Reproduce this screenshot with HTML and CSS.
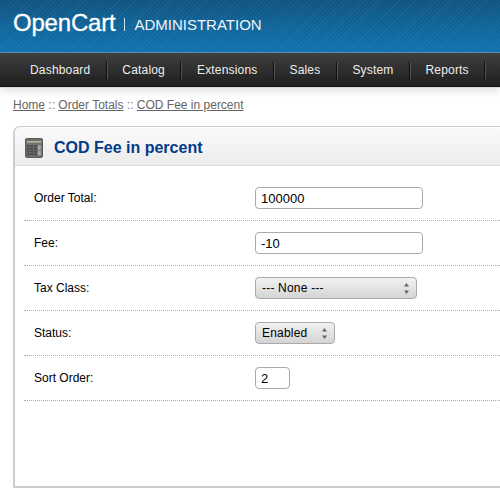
FILE: index.html
```html
<!DOCTYPE html>
<html>
<head>
    <meta charset="UTF-8">
    <title>COD Fee in percent</title>
    <link rel="stylesheet" href="styles.css">
</head>
<body>
    <div class="header">
        <span class="logo">OpenCart</span>
        <span class="logo-sep"></span>
        <span class="logo-sub">ADMINISTRATION</span>
    </div>

    <div class="menu">
        <a>Dashboard</a>
        <a>Catalog</a>
        <a>Extensions</a>
        <a>Sales</a>
        <a>System</a>
        <a>Reports</a>
    </div>

    <div class="content">
        <div class="breadcrumb">
            <a>Home</a> :: <a>Order Totals</a> :: <a>COD Fee in percent</a>
        </div>

        <div class="box">
            <div class="box-heading">
                <svg class="calc" viewBox="0 0 20 22">
                    <rect x="0.5" y="0.5" width="19" height="21" rx="1.5" fill="#6f736c" stroke="#4a4c48"/>
                    <rect x="2" y="2" width="16" height="3" fill="#b5b9a8"/>
                    <rect x="2" y="2" width="16" height="1" fill="#54574f"/>
                    <g fill="#44464a">
                        <rect x="2" y="8" width="3" height="2"/>
                        <rect x="6" y="8" width="3" height="2"/>
                        <rect x="10" y="8" width="3" height="2"/>
                        <rect x="2" y="11" width="3" height="2"/>
                        <rect x="6" y="11" width="3" height="2"/>
                        <rect x="10" y="11" width="3" height="2"/>
                        <rect x="2" y="14" width="3" height="2"/>
                        <rect x="6" y="14" width="3" height="2"/>
                        <rect x="10" y="14" width="3" height="2"/>
                        <rect x="2" y="17" width="3" height="2"/>
                        <rect x="6" y="17" width="3" height="2"/>
                        <rect x="10" y="17" width="3" height="2"/>
                    </g>
                    <rect x="14.500" y="8" width="3" height="5" fill="#a9aca6"/>
                    <rect x="14.500" y="14" width="3" height="5" fill="#a9aca6"/>
                </svg>
                <h1>COD Fee in percent</h1>
            </div>
            <div class="box-body">
                <div class="row">
                    <label>Order Total:</label>
                    <input class="field wide" type="text" value="100000">
                </div>
                <div class="row">
                    <label>Fee:</label>
                    <input class="field wide" type="text" value="-10">
                </div>
                <div class="row">
                    <label>Tax Class:</label>
                    <div class="select tax">
                        <span>--- None ---</span>
                        <svg class="arrows" viewBox="0 0 7 13"><path d="M3.500 1L6 4.500H1zM3.500 12L1 8.500h5z"/></svg>
                    </div>
                </div>
                <div class="row">
                    <label>Status:</label>
                    <div class="select status">
                        <span>Enabled</span>
                        <svg class="arrows" viewBox="0 0 7 13"><path d="M3.500 1L6 4.500H1zM3.500 12L1 8.500h5z"/></svg>
                    </div>
                </div>
                <div class="row">
                    <label>Sort Order:</label>
                    <input class="field small" type="text" value="2">
                </div>
            </div>
        </div>
    </div>
</body>
</html>
```

FILE: styles.css
```css
* { margin: 0; padding: 0; box-sizing: border-box; }
html, body { height: 500px; overflow: hidden; }
body {
    background: #fff;
    color: #000;
    font-family: "Liberation Sans", Arial, sans-serif;
    font-size: 12px;
}

.header {
    height: 53px;
    display: flex;
    align-items: center;
    padding: 0 0 6px 13px;
    border-bottom: 1px solid #5f8db5;
    background:
        repeating-linear-gradient(135deg, rgba(255, 255, 255, 0.05) 0 1px, transparent 1px 3px),
        linear-gradient(#0f5482, #0f74b0);
}
.logo {
    color: #fff;
    font-size: 24px;
    letter-spacing: -0.2px;
    -webkit-text-stroke: 0.3px #fff;
}
.logo-sep {
    width: 1px;
    height: 13px;
    margin: 2px 9px 0;
    background: #d5e4ef;
}
.logo-sub {
    color: #f0f5f9;
    font-size: 15px;
    margin-top: 2px;
}

.menu {
    height: 34px;
    display: flex;
    align-items: center;
    padding: 2px 0 0 14px;
    white-space: nowrap;
    background: linear-gradient(#3f3f3f, #1f1f1f);
    border-bottom: 1px solid #111;
    box-shadow: 0 1px 0 #ddd, 0 4px 8px rgba(0, 0, 0, 0.12);
}
.menu a {
    color: #eee;
    font-size: 12px;
    letter-spacing: 0.18px;
    line-height: 17px;
    padding: 0 15.500px 0 16px;
    margin-right: -0.5px;
    border-right: 1px solid #0e0e0e;
    box-shadow: 1px 0 0 #555;
}

.content { padding: 0 0 0 13px; }

.breadcrumb {
    height: 39px;
    padding-top: 11px;
    color: #7e7e7e;
    font-size: 12px;
    line-height: 14px;
}
.breadcrumb a { color: #656565; text-decoration: underline; }

.box {
    height: 362px;
    border: 2px solid #cdcdcd;
    border-top-width: 1px;
    border-top-left-radius: 7px;
    border-right: 0;
}
.box-heading {
    height: 39px;
    display: flex;
    align-items: center;
    padding: 3px 0 0 10px;
    border-bottom: 1px solid #ddd;
    background: linear-gradient(#fafafa, #ececec);
    border-top-left-radius: 6px;
}
.calc { width: 18px; height: 20px; margin-right: 11px; }
.box-heading h1 {
    color: #003a88;
    font-size: 16px;
    font-weight: bold;
}

.box-body { padding: 10px 0 0 9px; }
.row {
    height: 45px;
    display: flex;
    align-items: center;
    padding-left: 10px;
    border-bottom: 1px dotted #aaa;
}
.row label { width: 221px; }

.field {
    height: 22px;
    padding: 0 5px;
    border: 1px solid #aaa;
    border-radius: 4px;
    background: #fff;
    font-family: inherit;
    font-size: 13px;
    color: #000;
}
.wide { width: 168px; }
.small { width: 35px; }

.select {
    height: 22px;
    display: flex;
    align-items: center;
    justify-content: space-between;
    padding: 0 6px;
    border: 1px solid #aaa;
    border-radius: 4px;
    background: linear-gradient(#f2f2f2, #d4d4d4);
    font-size: 12px;
    letter-spacing: 0.2px;
    color: #000;
}
.tax { width: 162px; }
.status { width: 80px; }
.arrows { width: 7px; height: 13px; fill: #666; }
```
